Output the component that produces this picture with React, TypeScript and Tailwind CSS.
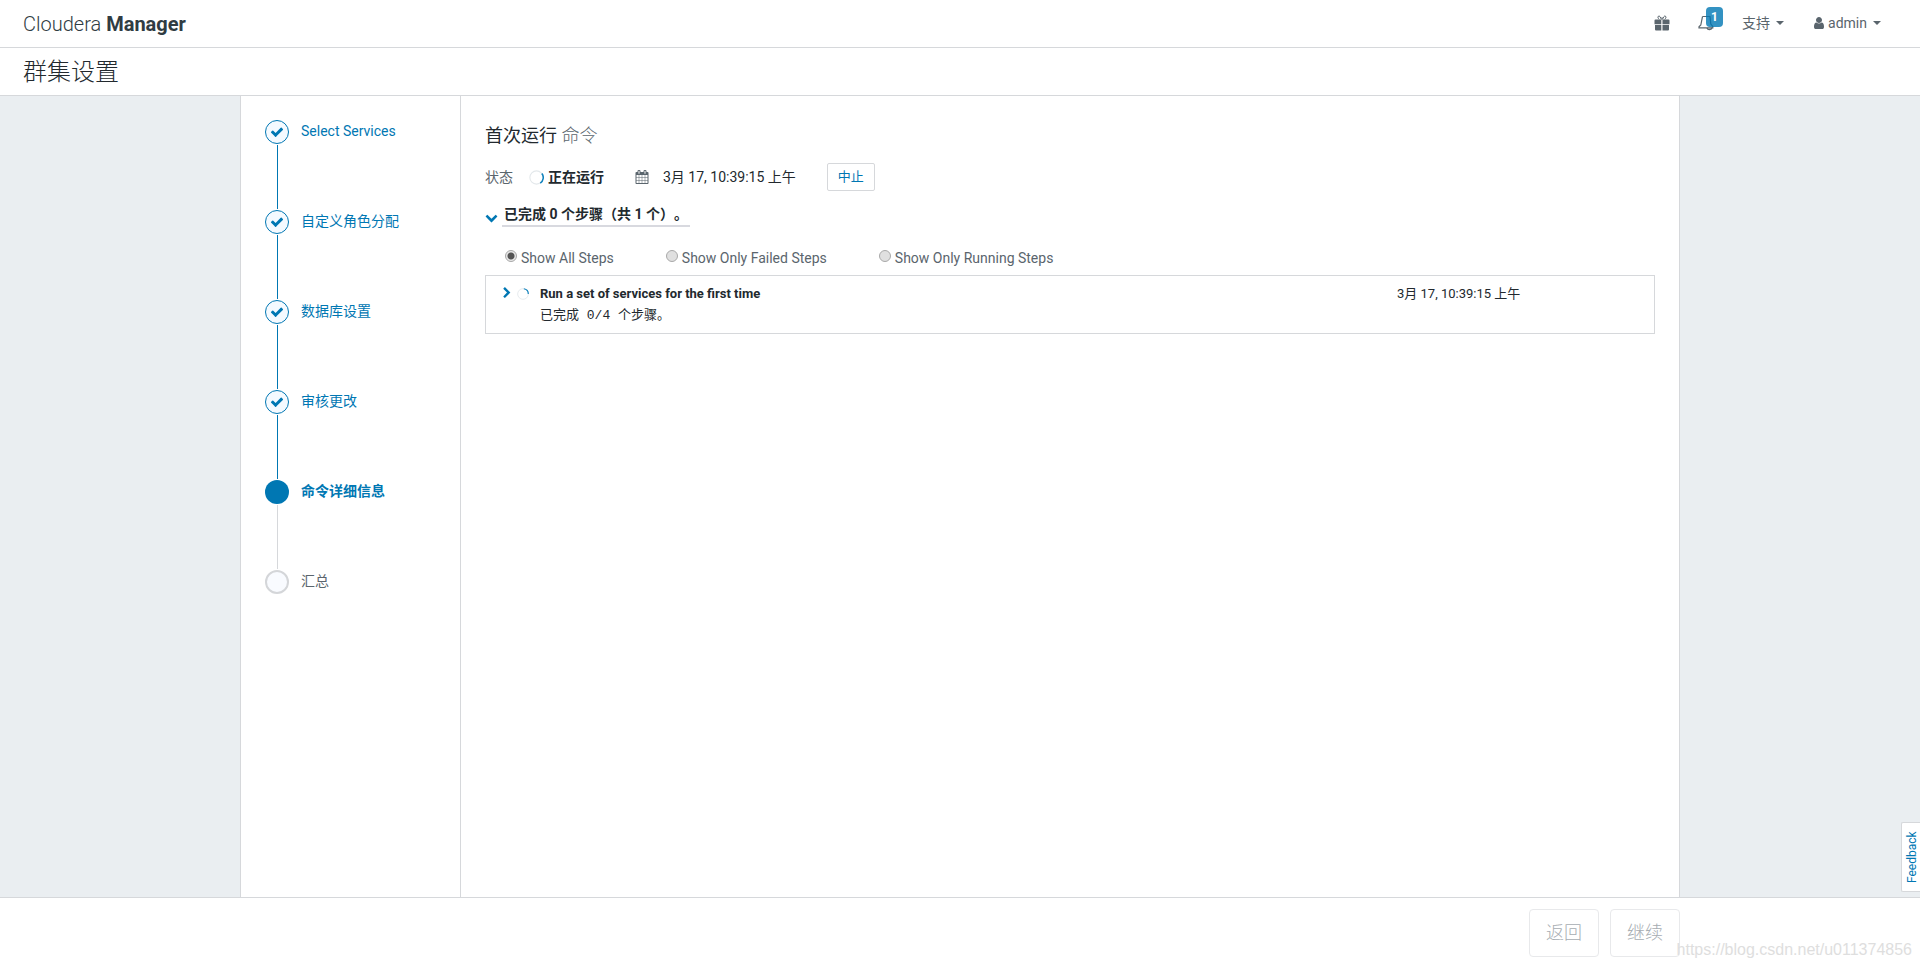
import React, { useState } from "react";

type IconProps = { className?: string };

const CheckIcon = ({ className }: IconProps) => (
  <svg viewBox="0 0 1792 1792" fill="currentColor" className={className} aria-hidden="true">
    <path d="M1671 566q0 40-28 68l-724 724-136 136q-28 28-68 28t-68-28l-136-136-362-362q-28-28-28-68t28-68l136-136q28-28 68-28t68 28l294 295 656-657q28-28 68-28t68 28l136 136q28 28 28 68z" />
  </svg>
);

const ChevronRightIcon = ({ className }: IconProps) => (
  <svg viewBox="0 0 1792 1792" fill="currentColor" className={className} aria-hidden="true">
    <path d="M1363 877l-742 742q-19 19-45 19t-45-19l-166-166q-19-19-19-45t19-45l531-531-531-531q-19-19-19-45t19-45l166-166q19-19 45-19t45 19l742 742q19 19 19 45t-19 45z" />
  </svg>
);

const ChevronDownIcon = ({ className }: IconProps) => (
  <svg viewBox="0 0 1792 1792" fill="currentColor" className={className} aria-hidden="true">
    <path d="M1683 808l-742 741q-19 19-45 19t-45-19l-742-741q-19-19-19-45.5t19-45.5l166-165q19-19 45-19t45 19l531 531 531-531q19-19 45-19t45 19l166 165q19 19 19 45.5t-19 45.5z" />
  </svg>
);

const UserIcon = ({ className }: IconProps) => (
  <svg viewBox="256 128 1280 1536" fill="currentColor" className={className} aria-hidden="true">
    <path d="M1536 1399q0 109-62.5 187t-150.5 78h-854q-88 0-150.5-78t-62.5-187q0-85 8.5-160.5t31.5-152 58.5-131 94-89 134.5-34.5q131 128 313 128t313-128q76 0 134.5 34.5t94 89 58.5 131 31.5 152 8.5 160.5zm-256-887q0 159-112.5 271.5t-271.5 112.5-271.5-112.5-112.5-271.5 112.5-271.5 271.5-112.5 271.5 112.5 112.5 271.5z" />
  </svg>
);

const CalendarIcon = ({ className }: IconProps) => (
  <svg viewBox="64 0 1664 1792" fill="currentColor" className={className} aria-hidden="true">
    <path d="M192 1664h288v-288h-288v288zm352 0h320v-288h-320v288zm-352-352h288v-320h-288v320zm352 0h320v-320h-320v320zm-352-384h288v-288h-288v288zm736 736h320v-288h-320v288zm-384-736h320v-288h-320v288zm768 736h288v-288h-288v288zm-384-352h320v-320h-320v320zm-352-864v-288q0-13-9.5-22.5t-22.5-9.5h-64q-13 0-22.5 9.5t-9.5 22.5v288q0 13 9.5 22.5t22.5 9.5h64q13 0 22.5-9.5t9.5-22.5zm736 864h288v-320h-288v320zm-384-384h320v-288h-320v288zm384 0h288v-288h-288v288zm32-480v-288q0-13-9.5-22.5t-22.5-9.5h-64q-13 0-22.5 9.5t-9.5 22.5v288q0 13 9.5 22.5t22.5 9.5h64q13 0 22.5-9.5t9.5-22.5zm384-64v1280q0 52-38 90t-90 38h-1408q-52 0-90-38t-38-90v-1280q0-52 38-90t90-38h128v-96q0-66 47-113t113-47h64q66 0 113 47t47 113v96h384v-96q0-66 47-113t113-47h64q66 0 113 47t47 113v96h128q52 0 90 38t38 90z" />
  </svg>
);

const GiftIcon = ({ className }: IconProps) => (
  <svg viewBox="0 0 15 16" fill="currentColor" className={className} aria-hidden="true">
    <path d="M1 4.5h5.8v4.8H0V5.5q0-1 1-1zM8 4.500h6q1 0 1 1v3.800H8zM.5 10h6.300v5.500H1.500q-1 0-1-1zM8 10h6.500v4.500q0 1-1 1H8z" />
    <path
      d="M7 4.400 5.500 1.700Q4.700.6 3.900 1.200 2.900 2.100 3.800 3.300L4.700 4.400M7.800 4.400 9.400 1.700Q10.100.6 11 1.200 12 2.100 11.100 3.300L10.200 4.400"
      fill="none"
      stroke="currentColor"
      strokeWidth="1"
    />
    <path d="M6.300 2h2.300v2.500H6.300z" opacity=".4" />
  </svg>
);

const BellIcon = ({ className }: IconProps) => (
  <svg viewBox="0 0 16 15" fill="none" stroke="currentColor" className={className} aria-hidden="true">
    <path d="M4.500 1h7.500l.8 7.500 2 2.500v1.300H1V11.200L2.800 9.500 4.500 1.200" strokeWidth="1.200" />
    <path d="M9 12.500q.8 1.700 2.500 1.600 2.200-.2 2.500-2.100" strokeWidth="1.500" />
  </svg>
);

const Spinner = ({ className }: IconProps) => (
  <svg viewBox="0 0 14 14" fill="none" className={className} aria-hidden="true">
    <circle cx="7" cy="7" r="6.200" stroke="#e3e8eb" strokeWidth="1" />
    <path d="M8 .9A6.200 6.200 0 0 1 13.200 7" stroke="#0f82bd" strokeWidth="1.400" />
  </svg>
);

const StatusSpinner = ({ className }: IconProps) => (
  <svg viewBox="0 0 14 14" fill="none" className={className} aria-hidden="true">
    <circle cx="7" cy="7" r="6.200" stroke="#e3e8eb" strokeWidth="1" />
    <path d="M12 3.200A6.200 6.200 0 0 1 10.500 12.200" stroke="#0f82bd" strokeWidth="1.400" />
  </svg>
);

const Caret = () => (
  <span className="inline-block border-x-4 border-t-4 border-x-transparent border-t-[#5a656d]" />
);

type StepState = "done" | "current" | "todo";

const steps: { label: string; state: StepState }[] = [
  { label: "Select Services", state: "done" },
  { label: "自定义角色分配", state: "done" },
  { label: "数据库设置", state: "done" },
  { label: "审核更改", state: "done" },
  { label: "命令详细信息", state: "current" },
  { label: "汇总", state: "todo" },
];

const marker: Record<StepState, string> = {
  done: "border border-[#0077b3] bg-[#f5faff] text-[#0077b3]",
  current: "bg-[#0077b3]",
  todo: "border-2 border-[#d4d6d9] bg-[#f9fbff]",
};

const labelTone: Record<StepState, string> = {
  done: "text-[#0077b3]",
  current: "font-bold text-[#0077b3]",
  todo: "text-[#5a656d]",
};

const filters = ["Show All Steps", "Show Only Failed Steps", "Show Only Running Steps"];

function Header() {
  return (
    <header className="flex h-12 items-center justify-between border-b border-[#d6d8db] pl-[23px] pr-[39px]">
      <a href="#" className="text-[20px] leading-6 text-[#303c43]">
        <span className="font-light">Cloudera</span> <span className="font-bold">Manager</span>
      </a>
      <nav className="flex items-center pb-px text-sm text-[#5a656d]">
        <button type="button" aria-label="Gift" className="mr-7">
          <GiftIcon className="h-4 w-4" />
        </button>
        <button type="button" aria-label="Notifications" className="relative mr-7">
          <BellIcon className="h-4 w-4" />
          <span className="absolute -top-2 left-2 flex h-5 w-[17px] items-center justify-center rounded-sm bg-[#0077b3]/80 text-xs font-bold text-white">
            1
          </span>
        </button>
        <button type="button" className="mr-[30px] flex items-center gap-1.5">
          支持 <Caret />
        </button>
        <button type="button" className="flex items-center gap-1.5">
          <span className="flex items-center gap-1">
            <UserIcon className="h-3 w-[10px]" />
            admin
          </span>
          <Caret />
        </button>
      </nav>
    </header>
  );
}

function Sidebar() {
  return (
    <ol className="w-[220px] shrink-0 border-r border-[#d6d8db] px-6 pt-6">
      {steps.map((step, i) => (
        <li key={step.label} className="flex gap-3">
          <div className="flex flex-col items-center">
            <span className={`flex size-6 items-center justify-center rounded-full ${marker[step.state]}`}>
              {step.state === "done" && <CheckIcon className="size-[14px]" />}
            </span>
            {i < steps.length - 1 && (
              <span
                className={`my-px h-16 w-px ${step.state === "done" ? "bg-[#0077b3]" : "bg-[#d6d8db]"}`}
              />
            )}
          </div>
          <span className={`h-6 text-sm leading-[22px] ${labelTone[step.state]}`}>{step.label}</span>
        </li>
      ))}
    </ol>
  );
}

function CommandDetails() {
  const [filter, setFilter] = useState(filters[0]);
  return (
    <main className="min-w-0 flex-1 px-6 pt-6">
      <h2 className="text-lg leading-8 text-[#22292e]">
        首次运行 <span className="font-light text-[#5a656d]">命令</span>
      </h2>
      <div className="mt-[11px] flex items-center text-sm text-[#22292e]">
        <span className="w-11 text-[#5a656d]">状态</span>
        <StatusSpinner className="mr-1 size-[15px]" />
        <span className="font-bold">正在运行</span>
        <CalendarIcon className="ml-[31px] mr-[14px] h-[14px] w-[14px] text-[#5a656d]" />
        <span>3月 17, 10:39:15 上午</span>
        <button
          type="button"
          className="ml-[31px] h-7 rounded-xs border border-[#d6d8db] px-[10px] text-[13px] text-[#0077b3]"
        >
          中止
        </button>
      </div>
      <button type="button" className="mt-[13px] flex items-center text-left">
        <ChevronDownIcon className="mr-1 mt-1 size-[13px] text-[#0077b3]" />
        <span className="border-b-2 border-[#d8d9df] px-0.5 text-sm font-bold leading-[21px] text-[#22292e] [text-spacing-trim:space-all]">
          已完成 0 个步骤（共 1 个）。
        </span>
      </button>
      <div className="mt-[19px] flex gap-[52px] pl-5 text-sm text-[#5a656d]">
        {filters.map((name) => (
          <label key={name} className="flex items-center gap-1 leading-6">
            <input
              type="radio"
              name="step-filter"
              checked={filter === name}
              onChange={() => setFilter(name)}
              className="mb-1 size-3 appearance-none rounded-full border border-[#a9a9a9] bg-[#e0e0e0] checked:bg-[radial-gradient(circle,#555_0_3px,#e8e8e8_4px)]"
            />
            {name}
          </label>
        ))}
      </div>
      <section className="mt-[5px] flex items-start border border-[#d6d8db] pb-[6px] pl-[15px] pt-[7px] text-[13px] text-[#22292e]">
        <button type="button" aria-label="Expand" className="mt-1 text-[#0077b3]">
          <ChevronRightIcon className="size-3" />
        </button>
        <Spinner className="ml-1 mt-[5px] size-3" />
        <div className="ml-[11px] flex-1">
          <p className="font-bold leading-[21px]">Run a set of services for the first time</p>
          <p className="font-['Liberation_Mono','Noto_Sans_CJK_SC',monospace] leading-[23px] [text-spacing-trim:space-all]">
            已完成 0/4 个步骤。
          </p>
        </div>
        <time className="w-[257px] leading-[21px]">3月 17, 10:39:15 上午</time>
      </section>
    </main>
  );
}

export default function App() {
  return (
    <div className="relative flex min-h-screen flex-col bg-white font-[Roboto,'Noto_Sans_CJK_SC',sans-serif]">
      <Header />
      <h1 className="flex h-12 items-center border-b border-[#d6d8db] px-[23px] text-2xl font-light text-[#22292e]">
        群集设置
      </h1>
      <div className="flex flex-1 bg-[#eaeef1]">
        <div className="mx-auto flex w-3/4 border-x border-[#d6d8db] bg-white">
          <Sidebar />
          <CommandDetails />
        </div>
      </div>
      <footer className="h-[72px] border-t border-[#d6d8db] pt-[11px]">
        <div className="mx-auto flex w-3/4 justify-end gap-[11px]">
          {["返回", "继续"].map((name) => (
            <button
              key={name}
              type="button"
              disabled
              className="h-12 rounded-sm border border-[#e8e9eb] px-4 text-lg font-light text-[#a7adb2]"
            >
              {name}
            </button>
          ))}
        </div>
      </footer>
      <button
        type="button"
        className="absolute bottom-[77px] right-0 h-[70px] rotate-180 rounded-r-xs border border-l-0 border-[#d6d8db] bg-white pr-0.5 text-xs text-[#0077b3] [writing-mode:vertical-rl]"
      >
        Feedback
      </button>
      <span className="absolute bottom-[7px] right-2 font-['Liberation_Sans',sans-serif] text-base text-[#dedede]">
        https://blog.csdn.net/u011374856
      </span>
    </div>
  );
}
